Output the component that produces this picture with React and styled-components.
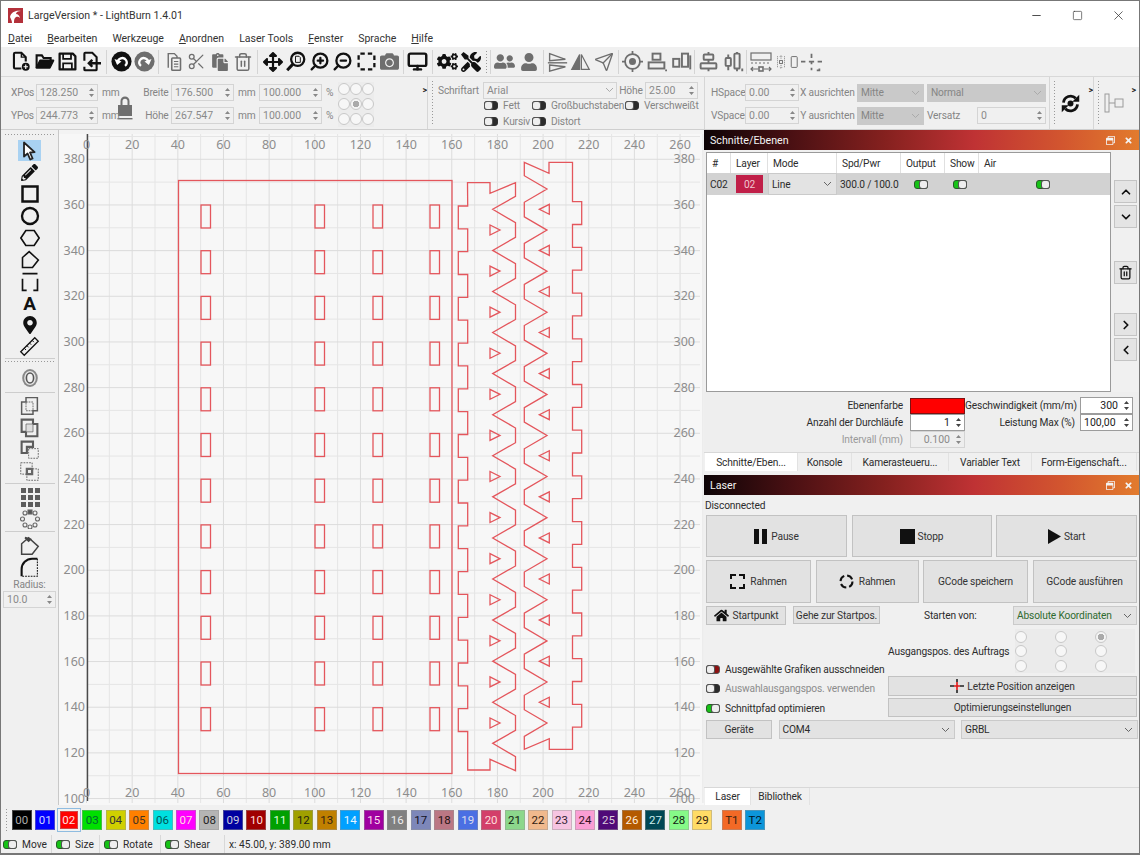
import React from "react";
import styled, { createGlobalStyle } from "styled-components";
import { FaArrowsAlt, FaCamera, FaCogs, FaTools, FaUserFriends, FaUser, FaPaste, FaHome, FaMapMarkerAlt, FaPencilAlt, FaTimes, FaRegWindowRestore } from "react-icons/fa";
import { Scissors, Trash2, ZoomIn, ZoomOut, Monitor, Send, ChevronUp, ChevronDown, ChevronLeft, ChevronRight, Minus, Square, X } from "lucide-react";

const GlobalStyle = createGlobalStyle`
  html, body { margin: 0; padding: 0; background: #f0f0f0; }
  body { font-family: Roboto, "Noto Sans", sans-serif; font-size: 10.2px; letter-spacing: -0.15px; color: #2c2c2c; }
  * { box-sizing: border-box; }
`;

const Win = styled.div`
  width: 1140px;
  height: 855px;
  display: flex;
  flex-direction: column;
  border: 1px solid #777;
  border-bottom-width: 2px;
  background: #f0f0f0;
  overflow: hidden;
`;

const TitleBar = styled.div`
  height: 29px;
  flex: none;
  background: #fff;
  display: flex;
  align-items: center;
  padding-left: 7px;
  font-size: 10.6px;
  letter-spacing: 0;
  color: #333;
`;

const TitleText = styled.span`
  margin-left: 5px;
  flex: 1;
`;

const WinButton = styled.div`
  width: 41px;
  height: 29px;
  display: flex;
  align-items: center;
  justify-content: center;
  color: #333;
`;

const MenuBar = styled.div`
  height: 17px;
  flex: none;
  background: #fff;
  display: flex;
  align-items: center;
  padding-left: 7px;
  gap: 15px;
  font-size: 10.5px;
  letter-spacing: 0;
  color: #333;
  u { text-underline-offset: 1px; }
`;

const IconBar = styled.div`
  height: 30px;
  flex: none;
  display: flex;
  align-items: center;
  padding-left: 8px;
  border-bottom: 1px solid #d8d8d8;
`;

const IconBtn = styled.div`
  width: ${(p) => p.$w || 23.4}px;
  height: 24px;
  flex: none;
  display: flex;
  align-items: center;
  justify-content: center;
  color: ${(p) => (p.$grey ? "#6e6e6e" : "#111")};
`;

const BarSep = styled.div`
  width: 1px;
  height: 24px;
  flex: none;
  margin: 0 ${(p) => p.$m ?? 2}px;
  background: #d4d4d4;
`;

const Handle = styled.div`
  width: 2px;
  align-self: stretch;
  flex: none;
  margin: 3px 3px;
  background-image: radial-gradient(circle, #999 0.7px, transparent 0.9px);
  background-size: 3px 3px;
`;

const PropBar = styled.div`
  height: 53px;
  flex: none;
  display: flex;
  border-bottom: 1px solid #cfcfcf;
`;

const PropGrid = styled.div`
  width: 420px;
  flex: none;
  padding: 4px 0 0 10px;
  display: grid;
  grid-template-columns: 25px 62px 22px 21px 30px 63px 25px 63px 16px 36px;
  grid-template-rows: 23px 23px;
  align-items: center;
  color: #858585;
`;

const FieldLabel = styled.div`
  text-align: ${(p) => p.$align || "left"};
  color: ${(p) => p.$color || "inherit"};
  width: ${(p) => p.$w || "auto"};
  white-space: nowrap;
`;

const Unit = styled.div`
  padding-left: 4px;
`;

const Field = styled.div`
  height: ${(p) => p.$h || 17}px;
  width: ${(p) => (p.$w ? p.$w + "px" : "auto")};
  background: ${(p) => (p.$white ? "#fff" : "transparent")};
  border: 1px solid ${(p) => (p.$white ? "#9c9c9c" : "#d4d4d4")};
  color: ${(p) => (p.$white ? "#222" : "#8a8a8a")};
  display: flex;
  align-items: center;
  justify-content: space-between;
  padding: 0 2px 0 3px;
  font-size: 10.5px;
  letter-spacing: 0;
`;

const FieldValue = styled.span`
  margin-left: auto;
  margin-right: 5px;
`;

const LockCell = styled.div`
  grid-row: 1 / 3;
  grid-column: 4;
  display: flex;
  justify-content: flex-start;
  padding-top: 8px;
  margin-left: -3px;
  color: #6f6f6f;
`;

const RadioGrid = styled.div`
  display: grid;
  grid-template-columns: repeat(3, ${(p) => p.$cw || 12}px);
  grid-auto-rows: ${(p) => p.$rh || 15}px;
  justify-items: ${(p) => (p.$start ? "start" : "center")};
  align-items: center;
  margin-right: ${(p) => p.$mr || 0}px;
  background: ${(p) => p.$bg || "#ececec"};
`;

const Radio = styled.span`
  width: ${(p) => p.$s || 12}px;
  height: ${(p) => p.$s || 12}px;
  border-radius: 50%;
  border: 1px solid #c8c8c8;
  background: ${(p) => (p.$on ? "radial-gradient(circle, #aaa 0 3px, #f4f4f4 3.5px)" : "#f7f7f7")};
`;

const RadioCell = styled.div`
  grid-row: 1 / 3;
  grid-column: 10;
`;

const More = styled.div`
  width: ${(p) => p.$w || 6}px;
  flex: none;
  font-size: 9px;
  font-weight: 700;
  color: #222;
  padding-top: 9px;
  line-height: 1;
  text-align: right;
`;

const PropSep = styled.div`
  width: 1px;
  flex: none;
  background: #d6d6d6;
`;

const FontBox = styled.div`
  width: 268px;
  flex: none;
  padding: 5px 0 0 2px;
  display: flex;
  flex-direction: column;
  color: #858585;
`;

const FontRow = styled.div`
  display: flex;
  align-items: center;
  height: ${(p) => p.$h || 16}px;
  margin-left: ${(p) => p.$ml || 0}px;
`;

const ToggleText = styled.span`
  margin-left: 5px;
  width: ${(p) => p.$w || "auto"};
  color: ${(p) => p.$color || "inherit"};
  white-space: nowrap;
`;

const Toggle = styled.span`
  width: 14px;
  height: 9px;
  flex: none;
  display: inline-flex;
  justify-content: ${(p) => (p.$on ? "flex-end" : "flex-start")};
  border-radius: 3px;
  background: ${(p) => p.$fill || "#2b2b2b"};
  border: 1px solid ${(p) => p.$edge || "#333"};
  &::before {
    content: "";
    width: 7px;
    height: 7px;
    border-radius: 2px;
    background: #eee;
    box-shadow: 0 0 0 1px #555;
  }
`;

const SpaceBox = styled.div`
  width: 344px;
  flex: none;
  padding: 4px 0 0 6px;
  display: grid;
  grid-template-columns: 34px 55px 57px 70px 119px;
  grid-template-rows: 23px 23px;
  align-items: center;
  color: #858585;
`;

const GreyCombo = styled.div`
  height: ${(p) => p.$h || 18}px;
  width: ${(p) => p.$w || 67}px;
  background: #c9c9c9;
  color: #858585;
  display: flex;
  align-items: center;
  justify-content: space-between;
  padding: 0 4px;
`;

const VersatzRow = styled.div`
  display: flex;
  align-items: center;
  justify-content: space-between;
`;

const SideIcon = styled.div`
  width: ${(p) => p.$w}px;
  margin-right: ${(p) => p.$mr || 0}px;
  flex: none;
  display: flex;
  align-items: center;
  justify-content: center;
  color: ${(p) => p.$color || "#111"};
`;

const Main = styled.div`
  height: 675px;
  flex: none;
  display: flex;
`;

const LeftTools = styled.div`
  width: 58px;
  flex: none;
  display: flex;
  flex-direction: column;
  align-items: center;
  padding-top: 3px;
  border-right: 1px solid #c8c8c8;
`;

const DotRule = styled.div`
  width: 52px;
  height: 3px;
  flex: none;
  margin-bottom: ${(p) => p.$mb || 0}px;
  background-image: radial-gradient(circle, #999 0.7px, transparent 0.9px);
  background-size: 3px 3px;
`;

const ToolBtn = styled.div`
  width: 23px;
  height: ${(p) => p.$h || 22}px;
  flex: none;
  display: flex;
  align-items: center;
  justify-content: center;
  color: #111;
  background: ${(p) => (p.$active ? "#a9d2f2" : "transparent")};
  font-weight: 700;
  font-size: 19px;
  line-height: 1;
`;

const ToolSep = styled.div`
  width: 50px;
  height: 1px;
  flex: none;
  background: #cdcdcd;
  margin: ${(p) => p.$m || "1px 0 2px"};
`;

const RadiusLabel = styled.div`
  color: #858585;
  line-height: 13px;
`;

const RadiusField = styled(Field)`
  width: 53px;
  height: 17px;
`;

const CanvasBox = styled.div`
  width: 645px;
  flex: none;
  background: #f7f7f7;
  svg { display: block; }
`;

const Dock = styled.div`
  flex: 1;
  min-width: 0;
  display: flex;
  flex-direction: column;
`;

const DockTitle = styled.div`
  height: 20px;
  flex: none;
  display: flex;
  align-items: center;
  padding: 0 6px;
  gap: 9px;
  color: #f3f3f3;
  font-size: 10.7px;
  letter-spacing: 0;
  background: linear-gradient(90deg, #0d0406 0%, #4a1013 20%, #86211f 42%, #bf3234 62%, #d2552f 82%, #e27b2d 100%);
`;

const DockName = styled.span`
  flex: 1;
`;

const CutsBody = styled.div`
  height: 240px;
  flex: none;
  margin-top: 2px;
  padding-left: 2px;
  display: flex;
`;

const CutsTable = styled.div`
  width: 405px;
  flex: none;
  background: #fff;
  border: 1px solid #9a9a9a;
`;

const TableRow = styled.div`
  display: grid;
  grid-template-columns: 24px 37px 69px 64px 44px 34px 1fr;
  height: ${(p) => p.$h}px;
  align-items: center;
  background: ${(p) => p.$bg || "transparent"};
`;

const HeadCell = styled.div`
  height: 100%;
  display: flex;
  align-items: center;
  padding-left: 5px;
  border-right: ${(p) => (p.$last ? "none" : "1px solid #e0e0e0")};
`;

const RowCell = styled.div`
  display: flex;
  align-items: center;
  justify-content: ${(p) => p.$justify || "flex-start"};
  padding-left: ${(p) => p.$pl ?? 3}px;
  padding-right: ${(p) => p.$pr ?? 0}px;
  height: 100%;
  white-space: nowrap;
`;

const LayerChip = styled.div`
  width: 27px;
  height: 18px;
  background: #c01f48;
  color: #f0c8d0;
  display: flex;
  align-items: center;
  justify-content: center;
`;

const Combo = styled.div`
  flex: ${(p) => (p.$w ? "none" : 1)};
  width: ${(p) => (p.$w ? p.$w + "px" : "auto")};
  height: ${(p) => p.$h || 19}px;
  background: #e3e3e3;
  border: 1px solid #cacaca;
  color: ${(p) => p.$color || "#2c2c2c"};
  display: flex;
  align-items: center;
  justify-content: space-between;
  padding: 0 4px 0 3px;
  white-space: nowrap;
`;

const SideButtons = styled.div`
  flex: 1;
  display: flex;
  flex-direction: column;
  padding: 28px 0 0 3px;
`;

const SquareBtn = styled.div`
  width: 23px;
  height: ${(p) => p.$h || 23}px;
  margin-bottom: ${(p) => p.$mb || 2}px;
  background: #e4e4e4;
  border: 1px solid #c4c4c4;
  display: flex;
  align-items: center;
  justify-content: center;
  color: #111;
`;

const LayerProps = styled.div`
  height: 60px;
  flex: none;
  padding: 5px 0 0 2px;
  display: grid;
  grid-template-columns: 204px 55px 115px 53px;
  grid-template-rows: 17px 17px 17px;
  align-items: center;
  background: #eee;
`;

const PropLabel = styled.div`
  text-align: right;
  padding-right: ${(p) => p.$pr || 7}px;
  color: ${(p) => (p.$dim ? "#9a9a9a" : "#2c2c2c")};
  white-space: nowrap;
`;

const Swatch = styled.div`
  height: 16px;
  background: #ff0000;
  border: 1px solid #7d1111;
`;

const TabRow = styled.div`
  height: ${(p) => p.$h || 19}px;
  flex: none;
  display: flex;
  padding-left: 1px;
  border-top: 1px solid #d8d8d8;
`;

const Tab = styled.div`
  width: ${(p) => p.$w}px;
  flex: none;
  background: ${(p) => (p.$active ? "#fff" : "#f0f0f0")};
  border-right: 1px solid #e2e2e2;
  display: flex;
  align-items: center;
  justify-content: center;
  white-space: nowrap;
`;

const LaserTitle = styled(DockTitle)`
  margin-top: 4px;
`;

const LaserBody = styled.div`
  height: 292px;
  flex: none;
  padding: 0 2px 0 2px;
  display: flex;
  flex-direction: column;
`;

const Status = styled.div`
  height: 20px;
  flex: none;
  display: flex;
  align-items: center;
  margin-left: -1px;
`;

const BtnRow = styled.div`
  display: grid;
  grid-template-columns: ${(p) => p.$cols};
  gap: 4.5px;
  height: ${(p) => p.$h}px;
  flex: none;
  margin-bottom: 3px;
`;

const BigBtn = styled.div`
  background: #e2e2e2;
  border: 1px solid #c2c2c2;
  display: flex;
  align-items: center;
  justify-content: center;
  gap: ${(p) => p.$gap ?? 3}px;
  white-space: nowrap;
  color: #333;
`;

const FlowRow = styled.div`
  display: flex;
  align-items: center;
  height: ${(p) => p.$h || 19}px;
  flex: none;
`;

const SmallBtn = styled(BigBtn)`
  width: ${(p) => p.$w}px;
  height: ${(p) => p.$bh || 19}px;
  flex: none;
  margin-right: ${(p) => p.$mr || 0}px;
  align-self: flex-start;
`;

const StartLabel = styled.div`
  margin-left: 44px;
  width: 89px;
  white-space: nowrap;
`;

const Lower = styled.div`
  display: flex;
  height: 93px;
  flex: none;
  margin-top: 1px;
`;

const LowerLeft = styled.div`
  width: 182px;
  flex: none;
  padding-top: 34px;
  display: flex;
  flex-direction: column;
`;

const OptRow = styled.div`
  height: ${(p) => p.$h || 19}px;
  flex: none;
  display: flex;
  align-items: center;
  color: ${(p) => (p.$dim ? "#8c8c8c" : "#2c2c2c")};
  white-space: nowrap;
`;

const LowerRight = styled.div`
  flex: 1;
  display: flex;
  flex-direction: column;
`;

const OriginRow = styled.div`
  height: 50px;
  flex: none;
  display: flex;
  align-items: center;
  justify-content: space-between;
`;

const WideBtn = styled(BigBtn)`
  height: ${(p) => p.$h || 20}px;
  flex: none;
  margin-bottom: 2px;
`;

const DeviceRow = styled(FlowRow)`
  margin-top: 1px;
  gap: 6.5px;
`;

const Spacer = styled.div`
  flex: 1;
`;

const Palette = styled.div`
  height: 30px;
  flex: none;
  display: flex;
  align-items: center;
  padding-left: 1px;
`;

const ChipWrap = styled.div`
  width: 23.48px;
  height: 24px;
  flex: none;
  display: flex;
  align-items: center;
  justify-content: center;
  margin-left: ${(p) => p.$ml || 0}px;
`;

const Chip = styled.div`
  width: ${(p) => (p.$sel ? 18 : 20)}px;
  height: ${(p) => (p.$sel ? 18 : 20)}px;
  background: ${(p) => p.$bg};
  color: ${(p) => p.$fg};
  border: 1px solid rgba(150, 150, 150, 0.45);
  display: flex;
  align-items: center;
  justify-content: center;
  font-size: 11.5px;
  letter-spacing: 0;
  box-shadow: ${(p) => (p.$sel ? "0 0 0 2px #f0f0f0, 0 0 0 3px #8fbce0" : "none")};
`;

const StatusBar = styled.div`
  height: 18px;
  flex: none;
  display: flex;
  align-items: center;
  padding-left: 2px;
  letter-spacing: 0;
`;

const StatusItem = styled.div`
  display: flex;
  align-items: center;
  height: 100%;
  width: ${(p) => p.$w}px;
  flex: none;
  padding-left: ${(p) => p.$pl ?? 0}px;
  border-right: ${(p) => (p.$sep === false ? "none" : "1px solid #d8d8d8")};
`;

const COLORS = [
  ["00", "#000000", "#aaa"], ["01", "#0000ff", "#cfd6ff"], ["02", "#ff0000", "#ffe0e0"], ["03", "#00e000", "#063"],
  ["04", "#d0d000", "#333"], ["05", "#ff8000", "#432"], ["06", "#00e0e0", "#055"], ["07", "#ff00ff", "#fdd"],
  ["08", "#b4b4b4", "#222"], ["09", "#0000a0", "#ccd"], ["10", "#a00000", "#fdd"], ["11", "#00a000", "#dfd"],
  ["12", "#a0a000", "#221"], ["13", "#c08000", "#321"], ["14", "#00a0ff", "#e5f5ff"], ["15", "#a000a0", "#fde"],
  ["16", "#808080", "#eee"], ["17", "#7d87b9", "#112"], ["18", "#bb7784", "#211"], ["19", "#4a6fe3", "#dde"],
  ["20", "#d33f6a", "#fdd"], ["21", "#8cd78c", "#121"], ["22", "#f0b98d", "#321"], ["23", "#f6c4e1", "#323"],
  ["24", "#fa9ed4", "#312"], ["25", "#500a78", "#dcd"], ["26", "#b45a00", "#fed"], ["27", "#004754", "#cee"],
  ["28", "#86fa88", "#121"], ["29", "#ffdb66", "#321"], ["T1", "#f36926", "#321"], ["T2", "#0c95d9", "#012"],
];

const Chevron = ({ color = "#666" }) => (
  <svg width="9" height="6" viewBox="0 0 9 6"><path d="M1 1l3.5 3.5L8 1" fill="none" stroke={color} strokeWidth="1" /></svg>
);

const Spin = ({ color = "#444" }) => (
  <svg width="7" height="11" viewBox="0 0 7 11"><path d="M3.5 1L6 4H1zM3.5 10L1 7h5z" fill={color} /></svg>
);

const Lock = () => (
  <svg width="16" height="26" viewBox="0 0 16 26" fill="currentColor"><path d="M1 10h14v11H1zM3.5 10V6a4.5 4.5 0 019 0v4h-2V6.2a2.5 2.5 0 00-5 0V10z" /><rect x="0.5" y="23" width="15" height="1.4" /></svg>
);

const Logo = () => (
  <svg width="15" height="15" viewBox="0 0 15 15"><rect width="15" height="15" fill="#b3303a" /><path d="M2 9c1-5 6-7 11-6-3 0-5 1-5 3 2 0 3 1 4 4-2-2-4-1-5 0-1 1-1 3-1 5H4c0-2-1-4-2-6z" fill="#fff" /></svg>
);

const Ico = ({ s = 21, children, ...rest }) => (
  <svg width={s} height={s} viewBox="0 0 24 24" fill="none" stroke="currentColor" {...rest}>{children}</svg>
);

const NewDoc = () => (
  <Ico strokeWidth="2.4"><path d="M13 20H6a1.5 1.5 0 01-1.5-1.5v-15A1.5 1.5 0 016 2h7l5 5v5" /><path d="M13 2v5h5" strokeWidth="1.6" /><circle cx="18" cy="18" r="4.5" fill="currentColor" stroke="none" /><path d="M18 15.5v5M15.5 18h5" stroke="#fff" strokeWidth="1.3" /></Ico>
);
const OpenFolder = () => (
  <Ico strokeWidth="2.4"><path d="M3 19V5h6l2 3h8v3" /><path d="M3 19l4-8h15l-4 8z" fill="currentColor" stroke="currentColor" strokeLinejoin="round" /></Ico>
);
const Floppy = () => (
  <Ico strokeWidth="2.6"><path d="M3 3h15l3 3v15H3z" strokeLinejoin="round" /><path d="M7 3v6h9V3M7 21v-7h10v7" strokeWidth="2" /></Ico>
);
const ImportDoc = () => (
  <Ico strokeWidth="2.4"><path d="M5 11V3a1 1 0 011-1h8l5 5v14a1 1 0 01-1 1H6a1 1 0 01-1-1v-3" /><path d="M24 14H10M14 10l-4 4 4 4" fill="currentColor" strokeWidth="2.6" /></Ico>
);
const Turn = ({ flip }) => (
  <svg width="21" height="21" viewBox="0 0 24 24" style={flip ? { transform: "scaleX(-1)" } : undefined}>
    <circle cx="12" cy="12" r="11.5" fill="currentColor" />
    <path d="M8 14a5 5 0 118 3" fill="none" stroke="#fff" strokeWidth="2.6" />
    <path d="M4 9l3 7 5-4z" fill="#fff" />
  </svg>
);
const CopyDocs = () => (
  <Ico strokeWidth="1.6"><path d="M6 19V3h7l3 3v2" /><rect x="10" y="8" width="10" height="14" rx="1" strokeWidth="1.8" /><path d="M12.5 12h5M12.5 15h5M12.5 18h5" strokeWidth="1.2" /></Ico>
);
const ZoomPage = () => (
  <Ico strokeWidth="2.6"><circle cx="14.5" cy="9.5" r="7.5" /><path d="M9 15l-6.5 7" strokeWidth="3.4" /><path d="M12 6h4l1.5 1.5V13H12z" strokeWidth="1.1" /></Ico>
);
const DashFrame = () => (
  <Ico strokeWidth="2.6"><rect x="3" y="3" width="18" height="18" rx="2" strokeDasharray="5 3.5" /></Ico>
);
const MirrorV = () => (
  <Ico strokeWidth="1.6"><path d="M3 3l18 6.5L3 11z" /><path d="M1 13.5h22" /><path d="M3 16l18 2-18 5z" /></Ico>
);
const MirrorH = () => (
  <Ico strokeWidth="1.4"><path d="M11 4L2 21h9z" fill="currentColor" /><path d="M13 4l9 17h-9z" /></Ico>
);
const Target = () => (
  <Ico strokeWidth="2"><circle cx="12" cy="12" r="8.5" /><circle cx="12" cy="12" r="3" fill="currentColor" /><path d="M12 0v3.5M12 20.5V24M0 12h3.5M20.5 12H24" /></Ico>
);
const AlignA = () => (
  <Ico strokeWidth="2.2"><rect x="7.5" y="3" width="9" height="7" /><rect x="3" y="13" width="18" height="7" /><path d="M23 21v2" /></Ico>
);
const AlignB = () => (
  <Ico strokeWidth="2.2"><rect x="2.5" y="9" width="7" height="9" /><rect x="12.5" y="3" width="7" height="15" /><path d="M22 5v16" /></Ico>
);
const AlignC = () => (
  <Ico strokeWidth="2.2"><rect x="6.5" y="4" width="11" height="6" rx="1" /><rect x="3" y="14" width="18" height="6" rx="1" /><path d="M12 1v3M12 10v4M12 20v3" /></Ico>
);
const AlignD = () => (
  <Ico strokeWidth="2.2"><rect x="3" y="8" width="6" height="9" rx="1" /><rect x="13" y="3" width="6" height="17" rx="1" /><path d="M6 4v4M6 17v5M16 1v2M16 20v3M22 20v3" /></Ico>
);
const SpreadA = () => (
  <Ico s={24} strokeWidth="1.2"><rect x="2" y="3" width="20" height="7" /><path d="M2 13h20" strokeDasharray="2 2" /><path d="M2 19h7M15 19h7M4 17l-2 2 2 2M20 17l2 2-2 2" /><rect x="10" y="17" width="4" height="4" strokeWidth="1.6" /></Ico>
);
const SpreadB = () => (
  <Ico s={24} strokeWidth="1.2"><path d="M12 1v6M12 17v6M10 3l2-2 2 2M10 21l2 2 2-2M6 2v20M18 2v20" strokeDasharray="2 1.4" /><rect x="9.5" y="9.5" width="5" height="5" strokeWidth="1.6" /></Ico>
);
const TallBox = () => (
  <Ico s={24} strokeWidth="1.8"><rect x="6" y="2" width="11" height="20" rx="1.5" /></Ico>
);
const Cross = () => (
  <Ico strokeWidth="2"><path d="M0 12h5M9 12h6M19 12h5M12 3v5M12 12v3M12 19v3" /><path d="M21 20v3M18 22h3" /></Ico>
);
const SyncDot = () => (
  <svg width="21" height="21" viewBox="0 0 24 24" fill="none" stroke="#111" strokeWidth="3.2">
    <path d="M4 11a8.2 8.2 0 0114-5" />
    <path d="M20 13a8.2 8.2 0 01-14 5" />
    <path d="M22 2v8h-8z" fill="#111" stroke="none" />
    <path d="M2 22v-8h8z" fill="#111" stroke="none" />
    <circle cx="12" cy="12" r="3.4" fill="#111" stroke="none" />
  </svg>
);

const Arrow = () => (
  <svg width="20" height="20" viewBox="0 0 20 20"><path d="M4 1.5v14l3.6-3 2.6 6 2.4-1-2.6-6 4.6-.4z" fill="#fff" stroke="#222" strokeWidth="1.8" strokeLinejoin="round" /></svg>
);
const RectTool = () => (<Ico s={20} strokeWidth="3"><rect x="3" y="3" width="18" height="18" /></Ico>);
const CircleTool = () => (<Ico s={20} strokeWidth="2.8"><circle cx="12" cy="12" r="9.6" /></Ico>);
const HexTool = () => (<Ico s={20} strokeWidth="2"><path d="M7 3h10l6 9-6 9H7l-6-9z" /></Ico>);
const PentaTool = () => (<Ico s={20} strokeWidth="1.9"><path d="M3 9l8-7 11 10-7 9H3z" /></Ico>);
const Bracket = () => (
  <Ico s={20} strokeWidth="2"><path d="M3 2h18M3 8v14h5M21 8v14h-5" /></Ico>
);
const Ruler = () => (
  <Ico s={21} strokeWidth="1.5"><path d="M2 18L18 2l4 4L6 22z" /><path d="M6 14l2 2M9 11l2 2M12 8l2 2M15 5l2 2" strokeWidth="1.1" /></Ico>
);
const OffsetO = () => (
  <svg width="20" height="20" viewBox="0 0 20 20"><ellipse cx="10" cy="10" rx="7.8" ry="9" fill="#888" /><ellipse cx="10" cy="10" rx="5.8" ry="7" fill="#e8e8e8" /><ellipse cx="10" cy="10" rx="3.6" ry="5" fill="#f3f3f3" stroke="#555" strokeWidth="1.6" /></svg>
);
const BoolOne = () => (
  <Ico s={21} strokeWidth="1.7" color="#5c5c5c"><path d="M8 3h13v15h-5v4H3V8h5z" /><path d="M8 8h8v10H8z" strokeWidth="1" strokeDasharray="2 1" /></Ico>
);
const BoolTwo = () => (
  <Ico s={21} strokeWidth="2.4" color="#5c5c5c"><path d="M3 3h13v5h5v14H8v-5H3z" /><path d="M8 8h8v9H8z" strokeWidth="0.8" fill="#ddd" /></Ico>
);
const BoolThree = () => (
  <Ico s={21} strokeWidth="2.4" color="#5c5c5c"><path d="M16 9V3H3v13h6V9z" /><path d="M11 11h11v11H11z" strokeWidth="1" strokeDasharray="2 1.2" /></Ico>
);
const BoolFour = () => (
  <Ico s={21} strokeWidth="1.1" color="#666"><path d="M2 2h13v13H2zM9 9h13v13H9z" strokeDasharray="2 1.2" /><path d="M9 9h6v6H9z" strokeWidth="2.6" /></Ico>
);
const GridDots = () => (
  <svg width="20" height="20" viewBox="0 0 20 20" fill="#5c5c5c">
    {[1, 8, 15].map((y) => [1, 8, 15].map((x) => <rect key={x + "-" + y} x={x} y={y} width="5" height="5" />))}
  </svg>
);
const RingDots = () => (
  <svg width="20" height="20" viewBox="0 0 20 20" fill="none" stroke="#666" strokeWidth="1.1">
    <rect x="8" y="1" width="4" height="4" fill="#555" />
    {[[15, 4], [17.5, 10], [15, 16], [10, 18], [5, 16], [2.5, 10], [5, 4]].map(([x, y]) => <circle key={x + "" + y} cx={x} cy={y} r="2" />)}
  </svg>
);
const PentaArrow = () => (
  <Ico s={21} strokeWidth="1.7" color="#444"><path d="M3 10l8-7 11 10-7 9H3z" /><path d="M7 3l6 2-2 2z" fill="#111" strokeWidth="2" /></Ico>
);
const RoundCorner = () => (
  <Ico s={21} strokeWidth="2.4"><path d="M3 22v-8A12 12 0 0115 2h6" /><path d="M21 2v20H3" strokeWidth="1.2" strokeDasharray="2 1.2" /></Ico>
);
const Corners = () => (
  <svg width="15" height="15" viewBox="0 0 15 15" fill="none" stroke="#111" strokeWidth="2"><path d="M1 5V1h5M9 1h5v4M14 10v4H9M6 14H1v-4" /></svg>
);
const DashCircle = () => (
  <svg width="15" height="15" viewBox="0 0 15 15" fill="none" stroke="#111" strokeWidth="2"><circle cx="7.5" cy="7.5" r="6" strokeDasharray="6.4 3" /></svg>
);
const CrossRed = () => (
  <svg width="14" height="14" viewBox="0 0 14 14" fill="none" strokeWidth="1.6"><path d="M0 7h4M10 7h4" stroke="#222" /><path d="M7 0v3M7 11v3" stroke="#222" /><path d="M4 7h6M7 3v8" stroke="#e01818" /></svg>
);
const PauseIco = () => (
  <svg width="14" height="15" viewBox="0 0 14 15" fill="#111"><rect x="0" width="5" height="15" /><rect x="8" width="5" height="15" /></svg>
);
const StopIco = () => (<svg width="15" height="15"><rect width="15" height="15" fill="#111" /></svg>);
const PlayIco = () => (<svg width="13" height="15"><path d="M0 0l13 7.5L0 15z" fill="#111" /></svg>);
const Kink = () => (
  <svg width="22" height="22" viewBox="0 0 22 22" fill="none" stroke="#9a9a9a" strokeWidth="1"><rect x="1" y="2" width="4" height="18" /><path d="M5 11h6" /><rect x="11" y="7" width="8" height="8" /></svg>
);

// design on the canvas, page coordinates
const PX = (v) => 86.5 + v * 2.283;
const PY = (v) => 159.3 + (380 - v) * 2.283;

const SLOT_X = [201, 315, 373, 430];
const SLOT_Y = Array.from({ length: 12 }, (_, i) => 205 + i * 45.7);

const leftPiecePath = () => {
  const pts = [[467.5, 182.7], [490, 182.7], [490, 193.3], [515.5, 182.7], [515.5, 196.3]];
  for (let k = 0; k < 14; k++) {
    const v = 209.3 + k * 41.08;
    pts.push([492.7, v], [515.5, v + 13.3]);
    if (k < 13) pts.push([515.5, v + 28]);
  }
  pts.push([515.5, 770.7], [490, 759.3], [490, 770], [467.7, 770]);
  for (let k = 11; k >= 0; k--) {
    const t = 206 + k * 45.7;
    pts.push([467.7, t + 22.8], [458.3, t + 22.8], [458.3, t], [467.7, t]);
  }
  return "M" + pts.map((p) => p.join(" ")).join("L") + "Z";
};

const rightPiecePath = () => {
  const pts = [[524.3, 162.3], [549, 173.3], [549, 162.3], [572.5, 162.3]];
  for (let k = 0; k < 12; k++) {
    const t = 201.7 + k * 45.7;
    pts.push([572.5, t], [581.7, t], [581.7, t + 22.8], [572.5, t + 22.8]);
  }
  pts.push([572.5, 749.3], [549.3, 749.3], [549.3, 738.7], [524.3, 749.3]);
  for (let k = 13; k >= 0; k--) {
    const p = 189 + k * 41.08;
    pts.push([524.3, p + 13.3], [547, p], [524.3, p - 13.3]);
  }
  return "M" + pts.map((p) => p.join(" ")).join("L") + "Z";
};

const TRIS = Array.from({ length: 13 }, (_, i) => i);

const DesignCanvas = () => {
  const xs = Array.from({ length: 28 }, (_, i) => i * 10);
  const ys = Array.from({ length: 30 }, (_, i) => 100 + i * 10);
  const labelsX = Array.from({ length: 14 }, (_, i) => i * 20);
  const labelsY = Array.from({ length: 15 }, (_, i) => 100 + i * 20);
  return (
    <svg width="645" height="675" viewBox="59 130 645 675" fontFamily="'Noto Sans', sans-serif" fontSize="12.5" letterSpacing="0">
      {xs.map((v) => <line key={"v" + v} x1={PX(v)} x2={PX(v)} y1="133" y2="803" stroke={v % 20 === 0 ? "#dcdcdc" : "#e5e5e5"} />)}
      {ys.map((v) => <line key={"h" + v} x1="88" x2="700" y1={PY(v)} y2={PY(v)} stroke={v % 20 === 0 ? "#dcdcdc" : "#e5e5e5"} />)}
      <rect x="59" y="130" width="645" height="4" fill="#f3f3f3" />
      <line x1="87.5" x2="87.5" y1="134" y2="801" stroke="#4a4a4a" strokeWidth="1.4" />
      {labelsX.map((v) => (
        <g key={"lx" + v} fill="#8d8d8d" textAnchor="middle">
          <text x={PX(v)} y="149">{v}</text>
          <text x={PX(v)} y="797">{v}</text>
        </g>
      ))}
      {labelsY.map((v) => (
        <g key={"ly" + v} fill="#8d8d8d" textAnchor="end">
          <text x="85" y={PY(v) + 4}>{v}</text>
          <text x="695" y={PY(v) + 4}>{v}</text>
        </g>
      ))}
      <g fill="none" stroke="#e4565c" strokeWidth="1.3">
        <rect x="178.5" y="180.5" width="273.5" height="593" />
        {SLOT_X.map((x) => SLOT_Y.map((y) => <rect key={x + "-" + y} x={x} y={y} width="9.5" height="23" />))}
        <path d={leftPiecePath()} />
        <path d={rightPiecePath()} />
        {TRIS.map((k) => <path key={"a" + k} d={`M490 ${225 + k * 41.08}v10l10 -5z`} />)}
        {TRIS.map((k) => <path key={"b" + k} d={`M549.3 ${204.3 + k * 41.08}v10l-10 -5z`} />)}
      </g>
    </svg>
  );
};

const OnToggle = () => <Toggle $on $fill="#16c316" $edge="#2a5a2a" />;

const App = () => {
  const radios = Array.from({ length: 9 }, (_, i) => i);
  return (
    <>
      <GlobalStyle />
      <Win>
        <TitleBar>
          <Logo />
          <TitleText>LargeVersion * - LightBurn 1.4.01</TitleText>
          <WinButton><Minus size={13} strokeWidth={1.6} /></WinButton>
          <WinButton><Square size={11} strokeWidth={1.4} /></WinButton>
          <WinButton><X size={15} strokeWidth={1.2} /></WinButton>
        </TitleBar>
        <MenuBar>
          <span><u>D</u>atei</span>
          <span><u>B</u>earbeiten</span>
          <span>Werkzeuge</span>
          <span><u>A</u>nordnen</span>
          <span>Laser Tools</span>
          <span><u>F</u>enster</span>
          <span>Sprache</span>
          <span><u>H</u>ilfe</span>
        </MenuBar>
        <IconBar>
          <IconBtn><NewDoc /></IconBtn>
          <IconBtn><OpenFolder /></IconBtn>
          <IconBtn><Floppy /></IconBtn>
          <IconBtn><ImportDoc /></IconBtn>
          <BarSep $m={3} />
          <IconBtn><Turn /></IconBtn>
          <IconBtn $grey><Turn flip /></IconBtn>
          <BarSep />
          <IconBtn $grey><CopyDocs /></IconBtn>
          <IconBtn $grey><Scissors size={19} strokeWidth={1.6} /></IconBtn>
          <IconBtn $grey><FaPaste size={18} /></IconBtn>
          <IconBtn $grey><Trash2 size={20} strokeWidth={1.8} /></IconBtn>
          <BarSep $m={2.5} />
          <IconBtn><FaArrowsAlt size={20} /></IconBtn>
          <IconBtn><ZoomPage /></IconBtn>
          <IconBtn><ZoomIn size={21} strokeWidth={2.6} style={{ transform: "scaleX(-1)" }} /></IconBtn>
          <IconBtn><ZoomOut size={21} strokeWidth={2.6} style={{ transform: "scaleX(-1)" }} /></IconBtn>
          <IconBtn><DashFrame /></IconBtn>
          <IconBtn $grey><FaCamera size={19} /></IconBtn>
          <BarSep />
          <IconBtn><Monitor size={21} strokeWidth={2.8} /></IconBtn>
          <BarSep $m={2.5} />
          <IconBtn><FaCogs size={21} /></IconBtn>
          <IconBtn><FaTools size={20} /></IconBtn>
          <Handle />
          <BarSep $m={0} />
          <IconBtn $grey $w={26}><FaUserFriends size={21} /></IconBtn>
          <IconBtn $grey><FaUser size={18} /></IconBtn>
          <BarSep />
          <IconBtn $grey><MirrorV /></IconBtn>
          <IconBtn $grey><MirrorH /></IconBtn>
          <IconBtn $grey><Send size={20} strokeWidth={1.6} /></IconBtn>
          <BarSep />
          <IconBtn $grey><Target /></IconBtn>
          <IconBtn $grey $w={25}><AlignA /></IconBtn>
          <IconBtn $grey $w={24}><AlignB /></IconBtn>
          <BarSep $m={1} />
          <IconBtn $grey $w={25}><AlignC /></IconBtn>
          <IconBtn $grey><AlignD /></IconBtn>
          <BarSep $m={1} />
          <IconBtn $grey $w={26}><SpreadA /></IconBtn>
          <IconBtn $grey $w={14}><SpreadB /></IconBtn>
          <IconBtn $grey $w={13}><TallBox /></IconBtn>
          <IconBtn $grey $w={22}><Cross /></IconBtn>
        </IconBar>
        <PropBar>
          <PropGrid>
            <FieldLabel>XPos</FieldLabel>
            <Field><span>128.250</span><Spin color="#888" /></Field>
            <Unit>mm</Unit>
            <LockCell><Lock /></LockCell>
            <FieldLabel $align="right">Breite&nbsp;</FieldLabel>
            <Field><span>176.500</span><Spin color="#888" /></Field>
            <Unit>mm</Unit>
            <Field><span>100.000</span><Spin color="#888" /></Field>
            <Unit>%</Unit>
            <RadioCell>
              <RadioGrid>
                {radios.map((i) => <Radio key={i} $on={i === 4} />)}
              </RadioGrid>
            </RadioCell>
            <FieldLabel>YPos</FieldLabel>
            <Field><span>244.773</span><Spin color="#888" /></Field>
            <Unit>mm</Unit>
            <FieldLabel $align="right">Höhe&nbsp;</FieldLabel>
            <Field><span>267.547</span><Spin color="#888" /></Field>
            <Unit>mm</Unit>
            <Field><span>100.000</span><Spin color="#888" /></Field>
            <Unit>%</Unit>
          </PropGrid>
          <More>&gt;</More>
          <PropSep />
          <Handle />
          <FontBox>
            <FontRow>
              <FieldLabel $w="45px">Schriftart</FieldLabel>
              <Field $w={134}><span>Arial</span><Chevron color="#aaa" /></Field>
              <FieldLabel $w="28px" $align="center">Höhe</FieldLabel>
              <Field $w={53}><span>25.00</span><Spin color="#888" /></Field>
            </FontRow>
            <FontRow $ml={46} $h={15}>
              <Toggle />
              <ToggleText $w="29px">Fett</ToggleText>
              <Toggle />
              <ToggleText $w="74px">Großbuchstaben</ToggleText>
              <Toggle />
              <ToggleText>Verschweißt</ToggleText>
            </FontRow>
            <FontRow $ml={46} $h={16}>
              <Toggle />
              <ToggleText $w="29px">Kursiv</ToggleText>
              <Toggle />
              <ToggleText>Distort</ToggleText>
            </FontRow>
          </FontBox>
          <PropSep />
          <SpaceBox>
            <FieldLabel>HSpace</FieldLabel>
            <Field $w={54}><span>0.00</span><Spin color="#888" /></Field>
            <FieldLabel $align="right">X ausrichten&nbsp;</FieldLabel>
            <GreyCombo><span>Mitte</span><Chevron color="#aaa" /></GreyCombo>
            <GreyCombo $w={119}><span>Normal</span><Chevron color="#aaa" /></GreyCombo>
            <FieldLabel>VSpace</FieldLabel>
            <Field $w={54}><span>0.00</span><Spin color="#888" /></Field>
            <FieldLabel $align="right">Y ausrichten&nbsp;</FieldLabel>
            <GreyCombo><span>Mitte</span><Chevron color="#aaa" /></GreyCombo>
            <VersatzRow>
              <FieldLabel>Versatz</FieldLabel>
              <Field $w={69}><span>0</span><Spin color="#888" /></Field>
            </VersatzRow>
          </SpaceBox>
          <PropSep />
          <Handle />
          <SideIcon $w={24} $mr={5}><SyncDot /></SideIcon>
          <More>&gt;</More>
          <PropSep />
          <Handle />
          <SideIcon $w={26}><Kink /></SideIcon>
          <More $w={8}>&gt;</More>
        </PropBar>
        <Main>
          <LeftTools>
            <DotRule $mb={4} />
            <ToolBtn $active $h={21}><Arrow /></ToolBtn>
            <ToolBtn><FaPencilAlt size={17} /></ToolBtn>
            <ToolBtn><RectTool /></ToolBtn>
            <ToolBtn><CircleTool /></ToolBtn>
            <ToolBtn><HexTool /></ToolBtn>
            <ToolBtn><PentaTool /></ToolBtn>
            <ToolBtn><Bracket /></ToolBtn>
            <ToolBtn $h={21}>A</ToolBtn>
            <ToolBtn $h={21}><FaMapMarkerAlt size={18} /></ToolBtn>
            <ToolBtn><Ruler /></ToolBtn>
            <ToolSep $m="1px 0 1px" />
            <DotRule />
            <ToolBtn $h={29}><OffsetO /></ToolBtn>
            <ToolSep $m="0 0 1px" />
            <ToolBtn><BoolOne /></ToolBtn>
            <ToolBtn><BoolTwo /></ToolBtn>
            <ToolBtn><BoolThree /></ToolBtn>
            <ToolBtn><BoolFour /></ToolBtn>
            <ToolSep />
            <ToolBtn><GridDots /></ToolBtn>
            <ToolBtn><RingDots /></ToolBtn>
            <ToolSep />
            <ToolBtn><PentaArrow /></ToolBtn>
            <ToolBtn><RoundCorner /></ToolBtn>
            <RadiusLabel>Radius:</RadiusLabel>
            <RadiusField><span>10.0</span><Spin color="#888" /></RadiusField>
          </LeftTools>
          <CanvasBox>
            <DesignCanvas />
          </CanvasBox>
          <Dock>
            <DockTitle>
              <DockName>Schnitte/Ebenen</DockName>
              <FaRegWindowRestore size={9} />
              <FaTimes size={9} />
            </DockTitle>
            <CutsBody>
              <CutsTable>
                <TableRow $h={20}>
                  <HeadCell>#</HeadCell>
                  <HeadCell>Layer</HeadCell>
                  <HeadCell>Mode</HeadCell>
                  <HeadCell>Spd/Pwr</HeadCell>
                  <HeadCell>Output</HeadCell>
                  <HeadCell>Show</HeadCell>
                  <HeadCell $last>Air</HeadCell>
                </TableRow>
                <TableRow $h={22} $bg="#d2d2d2">
                  <RowCell>C02</RowCell>
                  <RowCell $justify="center" $pl={0}><LayerChip>02</LayerChip></RowCell>
                  <RowCell $pl={0}><Combo $w={69} $h={22}><span>Line</span><Chevron /></Combo></RowCell>
                  <RowCell>300.0 / 100.0</RowCell>
                  <RowCell $justify="center" $pl={0} $pr={4}><OnToggle /></RowCell>
                  <RowCell $justify="center" $pl={0} $pr={4}><OnToggle /></RowCell>
                  <RowCell $justify="center" $pl={0} $pr={4}><OnToggle /></RowCell>
                </TableRow>
              </CutsTable>
              <SideButtons>
                <SquareBtn><ChevronUp size={14} strokeWidth={3} /></SquareBtn>
                <SquareBtn $mb={33}><ChevronDown size={14} strokeWidth={3} /></SquareBtn>
                <SquareBtn $mb={29}><Trash2 size={15} strokeWidth={2} /></SquareBtn>
                <SquareBtn><ChevronRight size={14} strokeWidth={3} /></SquareBtn>
                <SquareBtn><ChevronLeft size={14} strokeWidth={3} /></SquareBtn>
              </SideButtons>
            </CutsBody>
            <LayerProps>
              <PropLabel>Ebenenfarbe</PropLabel>
              <Swatch />
              <PropLabel $pr={5}>Geschwindigkeit (mm/m)</PropLabel>
              <Field $white><FieldValue>300</FieldValue><Spin /></Field>
              <PropLabel>Anzahl der Durchläufe</PropLabel>
              <Field $white><FieldValue>1</FieldValue><Spin /></Field>
              <PropLabel $pr={5}>Leistung Max (%)</PropLabel>
              <Field $white><span>100,00</span><Spin /></Field>
              <PropLabel $dim>Intervall (mm)</PropLabel>
              <Field><FieldValue>0.100</FieldValue><Spin color="#888" /></Field>
            </LayerProps>
            <TabRow>
              <Tab $active $w={93}>Schnitte/Eben...</Tab>
              <Tab $w={54}>Konsole</Tab>
              <Tab $w={97}>Kamerasteueru...</Tab>
              <Tab $w={83}>Variabler Text</Tab>
              <Tab $w={105}>Form-Eigenschaft...</Tab>
            </TabRow>
            <LaserTitle>
              <DockName>Laser</DockName>
              <FaRegWindowRestore size={9} />
              <FaTimes size={9} />
            </LaserTitle>
            <LaserBody>
              <Status>Disconnected</Status>
              <BtnRow $cols="141px 140px 141px" $h={42}>
                <BigBtn><PauseIco /> Pause</BigBtn>
                <BigBtn><StopIco /> Stopp</BigBtn>
                <BigBtn><PlayIco /> Start</BigBtn>
              </BtnRow>
              <BtnRow $cols="105px 103px 105px 104px" $h={43}>
                <BigBtn $gap={5}><Corners /> Rahmen</BigBtn>
                <BigBtn $gap={5}><DashCircle /> Rahmen</BigBtn>
                <BigBtn>GCode speichern</BigBtn>
                <BigBtn>GCode ausführen</BigBtn>
              </BtnRow>
              <FlowRow>
                <SmallBtn $w={80} $mr={7} $gap={4}><FaHome size={15} color="#111" /> Startpunkt</SmallBtn>
                <SmallBtn $w={87} $bh={18}>Gehe zur Startpos.</SmallBtn>
                <StartLabel>Starten von:</StartLabel>
                <Combo $h={19} $color="#2f6b2f"><span>Absolute Koordinaten</span><Chevron /></Combo>
              </FlowRow>
              <Lower>
                <LowerLeft>
                  <OptRow><Toggle $fill="#8d1010" $edge="#555" /><ToggleText>Ausgewählte Grafiken ausschneiden</ToggleText></OptRow>
                  <OptRow $dim><Toggle /><ToggleText>Auswahlausgangspos. verwenden</ToggleText></OptRow>
                  <OptRow $h={20}><OnToggle /><ToggleText>Schnittpfad optimieren</ToggleText></OptRow>
                </LowerLeft>
                <LowerRight>
                  <OriginRow>
                    <FieldLabel $color="#2c2c2c">Ausgangspos. des Auftrags</FieldLabel>
                    <RadioGrid $cw={40} $rh={14.5} $bg="#ebebeb" $start $mr={2}>
                      {radios.map((i) => <Radio key={i} $s={12} $on={i === 2} />)}
                    </RadioGrid>
                  </OriginRow>
                  <WideBtn><CrossRed /> Letzte Position anzeigen</WideBtn>
                  <WideBtn $h={19}>Optimierungseinstellungen</WideBtn>
                </LowerRight>
              </Lower>
              <DeviceRow>
                <SmallBtn $w={66} $bh={19}>Geräte</SmallBtn>
                <Combo $w={176}><span>COM4</span><Chevron /></Combo>
                <Combo $w={177}><span>GRBL</span><Chevron /></Combo>
              </DeviceRow>
              <Spacer />
            </LaserBody>
            <TabRow $h={18}>
              <Tab $active $w={46}>Laser</Tab>
              <Tab $w={59}>Bibliothek</Tab>
            </TabRow>
          </Dock>
        </Main>
        <Palette>
          <Handle />
          {COLORS.map(([n, bg, fg], i) => (
            <ChipWrap key={n} $ml={n === "T1" ? 6 : 0}>
              <Chip $bg={bg} $fg={fg} $sel={i === 2}>{n}</Chip>
            </ChipWrap>
          ))}
        </Palette>
        <StatusBar>
          <StatusItem $w={49}><OnToggle /><ToggleText>Move</ToggleText></StatusItem>
          <StatusItem $w={48} $pl={4}><OnToggle /><ToggleText>Size</ToggleText></StatusItem>
          <StatusItem $w={61} $pl={4}><OnToggle /><ToggleText>Rotate</ToggleText></StatusItem>
          <StatusItem $w={64} $pl={4}><OnToggle /><ToggleText>Shear</ToggleText></StatusItem>
          <StatusItem $w={200} $pl={4} $sep={false}>x: 45.00, y: 389.00 mm</StatusItem>
        </StatusBar>
      </Win>
    </>
  );
};

export default App;
